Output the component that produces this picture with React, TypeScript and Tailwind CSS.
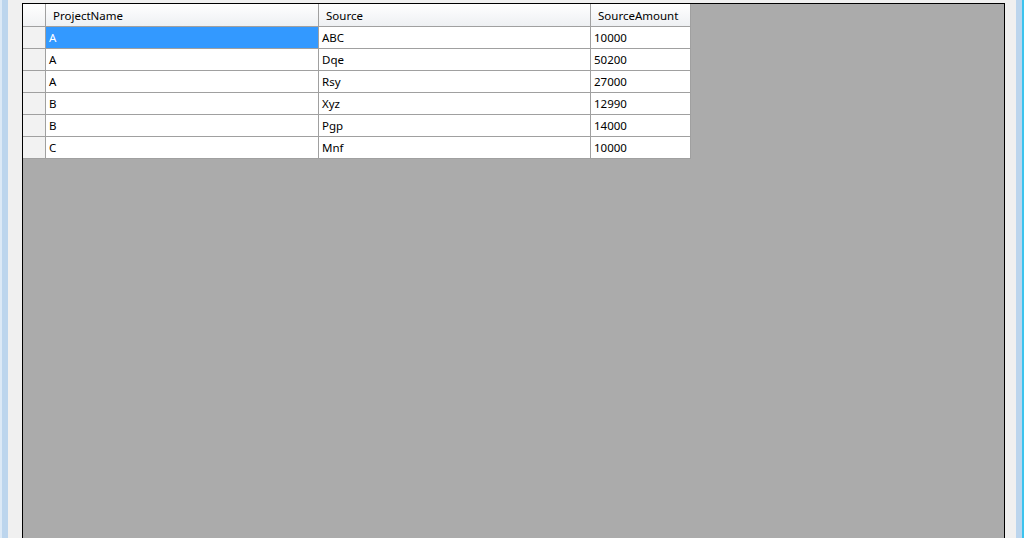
const columns = [
  { name: 'ProjectName', width: 'w-[273px]' },
  { name: 'Source', width: 'w-[272px]' },
  { name: 'SourceAmount', width: 'w-[100px]' },
];

const rows = [
  ['A', 'ABC', '10000'],
  ['A', 'Dqe', '50200'],
  ['A', 'Rsy', '27000'],
  ['B', 'Xyz', '12990'],
  ['B', 'Pgp', '14000'],
  ['C', 'Mnf', '10000'],
];

export default function App() {
  return (
    <div
      className="flex h-[538px] w-[1024px] overflow-hidden bg-[#f0f0f0] text-[11.5px] text-black"
      style={{ fontFamily: '"Noto Sans", "Liberation Sans", sans-serif' }}
    >
      {/* left window frame */}
      <div className="w-[2px] bg-[#dce9f6]" />
      <div className="w-[6px] bg-[#bcd5ed]" />
      <div className="w-[14px]" />

      <div className="mt-[3px] flex-1 border-l border-r border-t border-black bg-[#ababab]">
        <div className="flex w-fit flex-col">
          {/* header row */}
          <div className="flex h-[23px]">
            <div className="w-[23px] border-b border-r border-[#a0a0a0] bg-linear-to-b from-white to-[#f1f2f4]" />
            {columns.map((col) => (
              <div
                key={col.name}
                className={`${col.width} flex items-center border-b border-r border-[#a0a0a0] bg-linear-to-b from-white to-[#eef0f3] pl-[7px] pt-[1px]`}
              >
                {col.name}
              </div>
            ))}
          </div>

          {rows.map((row, i) => (
            <div key={i} className="flex h-[22px]">
              <div className="w-[23px] border-b border-r border-[#a0a0a0] bg-[#f2f2f2]" />
              {row.map((cell, j) => {
                const selected = i === 0 && j === 0;
                return (
                  <div
                    key={j}
                    className={`${columns[j].width} flex items-center border-b border-r border-[#a0a0a0] pl-[3px] ${
                      selected ? 'bg-[#3399ff] text-white' : 'bg-white'
                    }`}
                  >
                    {cell}
                  </div>
                );
              })}
            </div>
          ))}
        </div>
      </div>

      {/* right window frame */}
      <div className="w-[11px]" />
      <div className="w-[6px] bg-[#bcd5ed]" />
      <div className="w-[2px] bg-[#3cc3ee]" />
    </div>
  );
}
